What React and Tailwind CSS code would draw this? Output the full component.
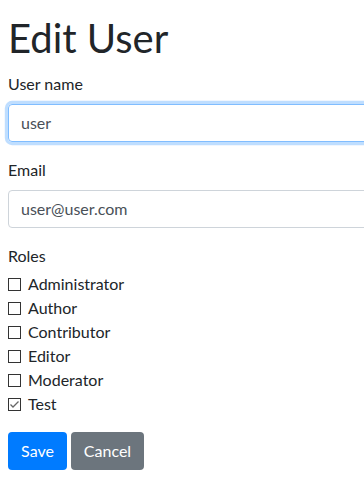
import React from 'react';

const roles = [
  { name: 'Administrator', checked: false },
  { name: 'Author', checked: false },
  { name: 'Contributor', checked: false },
  { name: 'Editor', checked: false },
  { name: 'Moderator', checked: false },
  { name: 'Test', checked: true },
];

function Box({ checked }) {
  return (
    <span className="w-[13px] h-[13px] border border-[#333] bg-white flex items-center justify-center shrink-0">
      {checked && (
        <svg width="11" height="11" viewBox="0 0 11 11">
          <path d="M1.5 5.5 L4 8 L9.5 2.5" fill="none" stroke="#666" strokeWidth="1.3" />
        </svg>
      )}
    </span>
  );
}

export default function App() {
  return (
    <div className="w-[364px] h-[477px] overflow-hidden bg-white text-[#212529] text-base leading-6 font-['Segoe_UI','Lato',sans-serif]">
      <div className="pt-[14px] px-2">
        <h1 className="text-[40px] leading-[48px] mb-[10px] font-normal">Edit User</h1>

        <div className="mb-4">
          <label className="block mb-2">User name</label>
          <div className="w-[420px] h-[38px] px-3 flex items-center rounded border border-[#80bdff] shadow-[0_0_0_3.2px_rgba(0,123,255,0.25)] text-[#495057]">
            user
          </div>
        </div>

        <div className="mb-4">
          <label className="block mb-2">Email</label>
          <div className="w-[420px] h-[38px] px-3 flex items-center rounded border border-[#ced4da] text-[#495057]">
            user@user.com
          </div>
        </div>

        <div className="mb-4">
          <label className="block mb-1">Roles</label>
          <div className="flex flex-col">
            {roles.map((r) => (
              <div key={r.name} className="flex items-center h-6">
                <Box checked={r.checked} />
                <span className="ml-[7px]">{r.name}</span>
              </div>
            ))}
          </div>
        </div>

        <div className="flex gap-1">
          <button className="bg-[#007bff] text-white w-[59px] h-[38px] rounded">Save</button>
          <button className="bg-[#6c757d] text-white w-[73px] h-[38px] rounded">Cancel</button>
        </div>
      </div>
    </div>
  );
}
